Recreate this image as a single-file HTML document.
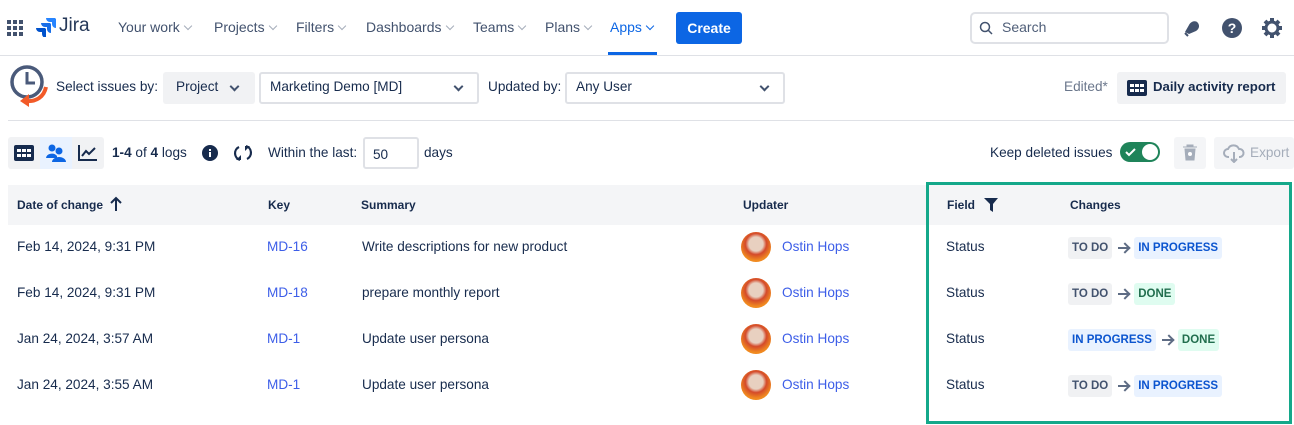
<!DOCTYPE html>
<html><head><style>
*{box-sizing:border-box;margin:0;padding:0}
body{width:1294px;height:425px;overflow:hidden;background:#fff;font-family:"Liberation Sans",sans-serif;color:#172b4d;position:relative;font-size:13.6px}
.a{position:absolute;white-space:nowrap}
.nav{color:#42526e;font-size:14px;top:19px}
.chev{display:inline-block;width:6px;height:6px;border-right:1.5px solid #a5adba;border-bottom:1.5px solid #a5adba;transform:rotate(45deg);margin-left:5px;position:relative;top:-3px}
.dchev{display:inline-block;width:7px;height:7px;border-right:2px solid #42526e;border-bottom:2px solid #42526e;transform:rotate(45deg)}
.hdr{font-size:12px;font-weight:bold;top:198px}
.lz{font-size:11.5px;font-weight:bold;padding:3px 4px;border-radius:3px;display:inline-block;line-height:16px;vertical-align:middle}
.td{background:#f0f1f3;color:#42526e}
.ip{background:#e9f2ff;color:#0c55cf}
.dn{background:#dffcf0;color:#216e4e}
.arr{display:inline-block;width:22px;height:14px;vertical-align:middle;position:relative}
.arr::before{content:"";position:absolute;left:6px;top:6px;width:10px;height:2px;background:#5e6c84}
.arr::after{content:"";position:absolute;left:9px;top:3px;width:6px;height:6px;border-right:2px solid #5e6c84;border-top:2px solid #5e6c84;transform:rotate(45deg)}
.av{width:30px;height:30px;border-radius:50%;background:radial-gradient(circle at 50% 40%,#e8d0c0 0 30%,#d44a2a 45%,#f08a20 70%);}
.nm{color:#3d5ee8}
</style></head><body>
<svg class="a" style="left:7px;top:20px" width="16" height="16"><g fill="#42526e"><rect x="0" y="0" width="4" height="4"/><rect x="6" y="0" width="4" height="4"/><rect x="12" y="0" width="4" height="4"/><rect x="0" y="6" width="4" height="4"/><rect x="6" y="6" width="4" height="4"/><rect x="12" y="6" width="4" height="4"/><rect x="0" y="12" width="4" height="4"/><rect x="6" y="12" width="4" height="4"/><rect x="12" y="12" width="4" height="4"/></g></svg>
<svg class="a" style="left:36px;top:17px" width="20" height="20" viewBox="0 0 20 20"><path d="M19 1H10a4 4 0 0 0 4 4h2v2a4 4 0 0 0 4 4V2z" fill="#2684ff"/><path d="M14 6H5a4 4 0 0 0 4 4h2v2a4 4 0 0 0 4 4V7z" fill="#1a6fe8"/><path d="M9 11H0a4 4 0 0 0 4 4h2v2a4 4 0 0 0 4 4v-9z" fill="#0052cc"/></svg>
<div class="a" style="left:59px;top:15px;font-size:19px;color:#253858">Jira</div>
<div class="a nav" style="left:118px">Your work<span class="chev"></span></div>
<div class="a nav" style="left:214px">Projects<span class="chev"></span></div>
<div class="a nav" style="left:296px">Filters<span class="chev"></span></div>
<div class="a nav" style="left:366px">Dashboards<span class="chev"></span></div>
<div class="a nav" style="left:473px">Teams<span class="chev"></span></div>
<div class="a nav" style="left:545px">Plans<span class="chev"></span></div>
<div class="a nav" style="left:610px;color:#0c66e4">Apps<span class="chev" style="border-color:#0c66e4"></span></div>
<div class="a" style="left:608px;top:52px;width:49px;height:3px;background:#0c66e4"></div>
<div class="a" style="left:676px;top:12px;width:66px;height:32px;background:#0c66e4;border-radius:3px;color:#fff;font-weight:bold;text-align:center;line-height:32px;font-size:14px">Create</div>
<div class="a" style="left:970px;top:12px;width:199px;height:32px;border:2px solid #dfe1e6;border-radius:5px"></div>
<svg class="a" style="left:979px;top:21px" width="14" height="14"><circle cx="6" cy="6" r="4.5" fill="none" stroke="#42526e" stroke-width="1.5"/><path d="M9.5 9.5l3.5 3.5" stroke="#42526e" stroke-width="1.5"/></svg>
<div class="a" style="left:1002px;top:19px;color:#505f79;font-size:14px">Search</div>
<svg class="a" style="left:1183px;top:18px" width="20" height="20"><path d="M2 14l4-7c2-4 7-5 9-2s1 6-2 8l-7 3z" fill="#42526e"/><path d="M2 15l3 3" stroke="#42526e" stroke-width="2"/></svg>
<svg class="a" style="left:1221px;top:17px" width="22" height="22"><circle cx="11" cy="11" r="10" fill="#42526e"/><text x="11" y="16" text-anchor="middle" fill="#fff" font-weight="bold" font-size="14" font-family="Liberation Sans">?</text></svg>
<svg class="a" style="left:1261px;top:17px" width="22" height="22" viewBox="0 0 22 22"><circle cx="11" cy="11" r="6" fill="none" stroke="#42526e" stroke-width="3"/><g stroke="#42526e" stroke-width="4"><path d="M11 1v4M11 17v4M1 11h4M17 11h4M4 4l3 3M15 15l3 3M4 18l3-3M15 7l3-3"/></g><circle cx="11" cy="11" r="3" fill="#fff"/></svg>
<div class="a" style="left:0;top:55px;width:1294px;height:1px;background:#dfe1e6"></div>
<svg class="a" style="left:8px;top:63px" width="40" height="50" viewBox="0 0 40 50"><circle cx="19" cy="19" r="15" fill="none" stroke="#4a5a7a" stroke-width="3.5"/><path d="M19 9v11h8" fill="none" stroke="#4a5a7a" stroke-width="3"/><path d="M38 24c-2 10-10 15-20 14" fill="none" stroke="#f25a28" stroke-width="4"/><path d="M12 38l9-7v13z" fill="#f25a28"/></svg>
<div class="a" style="left:56px;top:79px">Select issues by:</div>
<div class="a" style="left:163px;top:72px;width:92px;height:32px;background:#f1f2f4;border-radius:3px"></div>
<div class="a" style="left:176px;top:79px">Project</div>
<span class="a dchev" style="left:231px;top:83px"></span>
<div class="a" style="left:259px;top:72px;width:220px;height:32px;border:2px solid #dfe1e6;border-radius:3px"></div>
<div class="a" style="left:270px;top:79px">Marketing Demo [MD]</div>
<span class="a dchev" style="left:455px;top:83px"></span>
<div class="a" style="left:488px;top:79px">Updated by:</div>
<div class="a" style="left:565px;top:72px;width:220px;height:32px;border:2px solid #dfe1e6;border-radius:3px"></div>
<div class="a" style="left:576px;top:79px">Any User</div>
<span class="a dchev" style="left:761px;top:83px"></span>
<div class="a" style="left:1064px;top:79px;color:#6b778c">Edited*</div>
<div class="a" style="left:1117px;top:72px;width:169px;height:32px;background:#f1f2f4;border-radius:3px"></div>
<svg class="a" style="left:1127px;top:80px" width="20" height="16"><rect width="20" height="16" rx="2" fill="#172b4d"/><g fill="#fff"><rect x="3" y="4" width="4" height="3"/><rect x="8" y="4" width="4" height="3"/><rect x="13" y="4" width="4" height="3"/><rect x="3" y="9" width="4" height="3"/><rect x="8" y="9" width="4" height="3"/><rect x="13" y="9" width="4" height="3"/></g></svg>
<div class="a" style="left:1153px;top:79px;font-weight:bold;font-size:13.2px">Daily activity report</div>
<div class="a" style="left:8px;top:120px;width:1286px;height:1px;background:#dfe1e6"></div>
<div class="a" style="left:8px;top:137px;width:96px;height:32px;background:#f1f2f4;border-radius:3px"></div>
<div class="a" style="left:40px;top:137px;width:32px;height:32px;background:#e9f2ff"></div>
<svg class="a" style="left:14px;top:145px" width="20" height="16"><rect width="20" height="16" rx="2" fill="#172b4d"/><g fill="#fff"><rect x="3" y="4" width="4" height="3"/><rect x="8" y="4" width="4" height="3"/><rect x="13" y="4" width="4" height="3"/><rect x="3" y="9" width="4" height="3"/><rect x="8" y="9" width="4" height="3"/><rect x="13" y="9" width="4" height="3"/></g></svg>
<svg class="a" style="left:46px;top:143px" width="20" height="20"><circle cx="6" cy="5" r="3.5" fill="#0c66e4"/><circle cx="13" cy="8" r="3.5" fill="#0c66e4"/><path d="M0 15a6 5 0 0 1 11-2v2z M6 19a7 5 0 0 1 14 0z" fill="#0c66e4"/></svg>
<svg class="a" style="left:78px;top:144px" width="20" height="18"><path d="M1 1v15h18" fill="none" stroke="#172b4d" stroke-width="2"/><path d="M4 12l4-5 3 3 6-6" fill="none" stroke="#172b4d" stroke-width="2"/></svg>
<div class="a" style="left:112px;top:145px"><b>1-4</b> of <b>4</b> logs</div>
<svg class="a" style="left:202px;top:145px" width="16" height="16"><circle cx="8" cy="8" r="8" fill="#172b4d"/><rect x="7" y="7" width="2" height="5" fill="#fff"/><rect x="7" y="4" width="2" height="2" fill="#fff"/></svg>
<svg class="a" style="left:233px;top:143px" width="20" height="20"><path d="M6 4a7 7 0 0 0 1 13M14 16a7 7 0 0 0-1-13" fill="none" stroke="#172b4d" stroke-width="2.2"/><path d="M3 17h5v-5zM17 3h-5v5z" fill="#172b4d"/></svg>
<div class="a" style="left:268px;top:145px">Within the last:</div>
<div class="a" style="left:363px;top:137px;width:56px;height:32px;border:2px solid #dfe1e6;border-radius:3px;padding:8px 8px">50</div>
<div class="a" style="left:424px;top:145px">days</div>
<div class="a" style="left:990px;top:145px">Keep deleted issues</div>
<div class="a" style="left:1120px;top:142px;width:40px;height:20px;background:#1f845a;border-radius:10px"></div>
<div class="a" style="left:1142px;top:144px;width:16px;height:16px;background:#fff;border-radius:50%"></div>
<svg class="a" style="left:1125px;top:147px" width="12" height="10"><path d="M1 5l3 3 6-6" fill="none" stroke="#fff" stroke-width="2"/></svg>
<div class="a" style="left:1174px;top:137px;width:32px;height:32px;background:#f4f5f7;border-radius:3px"></div>
<svg class="a" style="left:1182px;top:144px" width="16" height="17"><path d="M1 3h14M5 3V1h6v2M3 5l1 11h8l1-11z" fill="#a5adba" stroke="#a5adba"/><circle cx="8" cy="10" r="2" fill="#fff"/></svg>
<div class="a" style="left:1214px;top:137px;width:80px;height:32px;background:#f4f5f7;border-radius:3px"></div>
<svg class="a" style="left:1223px;top:143px" width="22" height="20"><path d="M6 14H5a4 4 0 0 1 0-8 6 6 0 0 1 11 0 4 4 0 0 1 1 8h-1" fill="none" stroke="#a5adba" stroke-width="2"/><path d="M11 9v10M8 16l3 3 3-3" fill="none" stroke="#a5adba" stroke-width="2"/></svg>
<div class="a" style="left:1250px;top:145px;color:#a5adba">Export</div>
<div class="a" style="left:8px;top:185px;width:1283px;height:40px;background:#f4f5f7"></div>
<div class="a hdr" style="left:17px">Date of change</div>
<svg class="a" style="left:109px;top:196px" width="14" height="16"><path d="M7 15V2M2 7l5-5 5 5" fill="none" stroke="#172b4d" stroke-width="2"/></svg>
<div class="a hdr" style="left:268px">Key</div>
<div class="a hdr" style="left:361px">Summary</div>
<div class="a hdr" style="left:743px">Updater</div>
<div class="a hdr" style="left:947px">Field</div>
<svg class="a" style="left:983px;top:197px" width="16" height="16"><path d="M1 1h14l-5 6v8l-3-2V7z" fill="#172b4d"/></svg>
<div class="a hdr" style="left:1070px">Changes</div>

<div class="a" style="left:17px;top:239px">Feb 14, 2024, 9:31 PM</div>
<div class="a" style="left:267px;top:239px;color:#3d5ee8">MD-16</div>
<div class="a" style="left:362px;top:239px">Write descriptions for new product</div>
<div class="a av" style="left:741px;top:232px"></div>
<div class="a nm" style="left:782px;top:239px">Ostin Hops</div>
<div class="a" style="left:946px;top:239px">Status</div>
<div class="a" style="left:1068px;top:237px"><span class="lz td">TO DO</span><span class="arr"></span><span class="lz ip">IN PROGRESS</span></div>

<div class="a" style="left:17px;top:285px">Feb 14, 2024, 9:31 PM</div>
<div class="a" style="left:267px;top:285px;color:#3d5ee8">MD-18</div>
<div class="a" style="left:362px;top:285px">prepare monthly report</div>
<div class="a av" style="left:741px;top:278px"></div>
<div class="a nm" style="left:782px;top:285px">Ostin Hops</div>
<div class="a" style="left:946px;top:285px">Status</div>
<div class="a" style="left:1068px;top:283px"><span class="lz td">TO DO</span><span class="arr"></span><span class="lz dn">DONE</span></div>

<div class="a" style="left:17px;top:331px">Jan 24, 2024, 3:57 AM</div>
<div class="a" style="left:267px;top:331px;color:#3d5ee8">MD-1</div>
<div class="a" style="left:362px;top:331px">Update user persona</div>
<div class="a av" style="left:741px;top:324px"></div>
<div class="a nm" style="left:782px;top:331px">Ostin Hops</div>
<div class="a" style="left:946px;top:331px">Status</div>
<div class="a" style="left:1068px;top:329px"><span class="lz ip">IN PROGRESS</span><span class="arr"></span><span class="lz dn">DONE</span></div>

<div class="a" style="left:17px;top:377px">Jan 24, 2024, 3:55 AM</div>
<div class="a" style="left:267px;top:377px;color:#3d5ee8">MD-1</div>
<div class="a" style="left:362px;top:377px">Update user persona</div>
<div class="a av" style="left:741px;top:370px"></div>
<div class="a nm" style="left:782px;top:377px">Ostin Hops</div>
<div class="a" style="left:946px;top:377px">Status</div>
<div class="a" style="left:1068px;top:375px"><span class="lz td">TO DO</span><span class="arr"></span><span class="lz ip">IN PROGRESS</span></div>

<div class="a" style="left:926px;top:182px;width:366px;height:242px;border:3px solid #14a88a"></div>
</body></html>
